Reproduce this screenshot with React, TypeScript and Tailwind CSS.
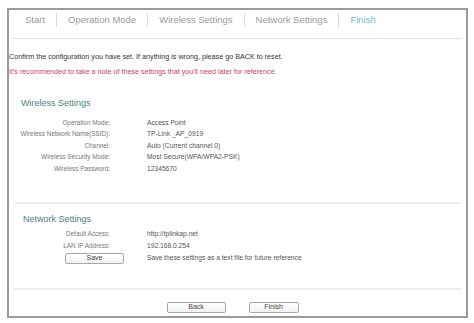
const tabs = ["Start", "Operation Mode", "Wireless Settings", "Network Settings", "Finish"];

const wireless: [string, string][] = [
  ["Operation Mode:", "Access Point"],
  ["Wireless Network Name(SSID):", "TP-Link _AP_0919"],
  ["Channel:", "Auto (Current channel 0)"],
  ["Wireless Security Mode:", "Most Secure(WPA/WPA2-PSK)"],
  ["Wireless Password:", "12345670"],
];

const network: [string, string][] = [
  ["Default Access:", "http://tplinkap.net"],
  ["LAN IP Address:", "192.168.0.254"],
];

function Row({ label, value }: { label: string; value: string }) {
  return (
    <div className="flex h-[11.5px] items-center whitespace-nowrap">
      <div className="flex w-[90px] shrink-0 justify-end text-[6.4px] text-[#777]">{label}</div>
      <div className="ml-[37px] text-[6.7px] text-[#555]">{value}</div>
    </div>
  );
}

function SmallButton({ children, className = "" }: { children: React.ReactNode; className?: string }) {
  return (
    <button
      className={`flex h-[11px] items-center justify-center rounded-[2px] border border-[#a8a8a8] bg-gradient-to-b from-white to-[#f2f2f2] text-[7px] text-[#444] ${className}`}
    >
      {children}
    </button>
  );
}

export default function App() {
  return (
    <div className="h-[323px] w-[474px] bg-white pl-[7px] pt-[8px] font-['Liberation_Sans',Arial,sans-serif]">
      <div className="flex h-[310px] w-[461px] flex-col border-2 border-[#9a9a9a]">
        {/* step tabs */}
        <div className="flex h-[20px] items-center pl-[16px] text-[9.5px]">
          {tabs.map((t, i) => (
            <div key={t} className="flex items-center">
              {i > 0 && <div className="mx-[11px] h-[14px] w-px bg-[#d8d8d8]" />}
              <span className={i === tabs.length - 1 ? "text-[#6cc0d0]" : "text-[#9a9a9a]"}>{t}</span>
            </div>
          ))}
        </div>
        <div className="mx-[4px] mt-[8px] h-px bg-[#e2e2e2]" />

        <div className="mt-[10px] text-[7.2px] leading-[15px]">
          <p className="text-[#333]">Confirm the configuration you have set. If anything is wrong, please go BACK to reset.</p>
          <p className="text-[#d0405a]">It's recommended to take a note of these settings that you'll need later for reference.</p>
        </div>

        <h2 className="ml-[12px] mt-[17px] text-[9px] leading-[14px] text-[#4f7c86]">Wireless Settings</h2>
        <div className="mt-[7px] pl-[11px]">
          {wireless.map(([l, v]) => (
            <Row key={l} label={l} value={v} />
          ))}
        </div>
        <div className="mx-[6px] mt-[27px] h-[2px] bg-[#ebebeb]" />

        <h2 className="ml-[14px] mt-[8px] text-[9px] leading-[14px] text-[#4f7c86]">Network Settings</h2>
        <div className="mt-[3px] pl-[11px]">
          {network.map(([l, v]) => (
            <Row key={l} label={l} value={v} />
          ))}
          <div className="mt-[1px] flex items-center whitespace-nowrap text-[6.7px] text-[#555]">
            <SmallButton className="ml-[45px] w-[59px]">Save</SmallButton>
            <span className="ml-[23px]">Save these settings as a text file for future reference</span>
          </div>
        </div>
        <div className="mx-[4px] mt-[24px] h-[2px] bg-[#ececec]" />

        <div className="mt-[12px] flex justify-center gap-[23px] pr-[10px]">
          <SmallButton className="w-[59px]">Back</SmallButton>
          <SmallButton className="w-[50px]">Finish</SmallButton>
        </div>
      </div>
    </div>
  );
}
